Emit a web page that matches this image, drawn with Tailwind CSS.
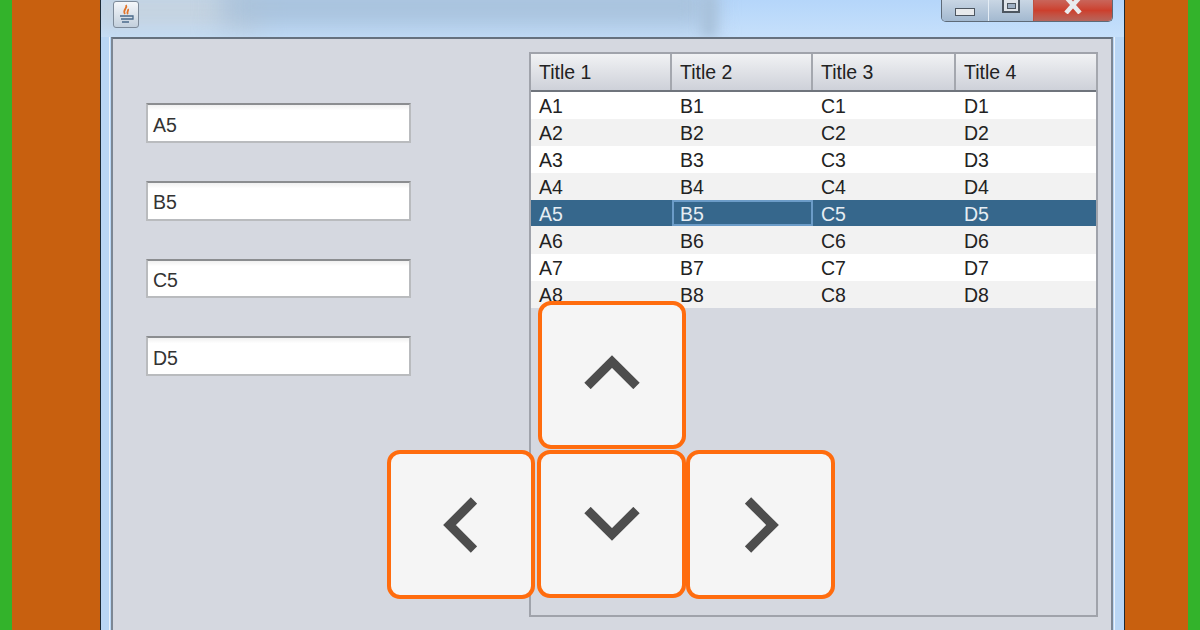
<!DOCTYPE html>
<html lang="en">
<head>
  <meta charset="UTF-8" />
  <title>Table navigation</title>
  <script src="https://cdn.jsdelivr.net/npm/@tailwindcss/browser@4"></script>
</head>
<body class="w-[1200px] h-[630px] overflow-hidden relative bg-[#c8600f] font-['Liberation_Sans',Arial,sans-serif] text-[19.5px] text-[#222]">

  <div class="flex h-[630px]">
    <div class="w-[12px] bg-[#33b32b]"></div>
    <div class="w-[88px] bg-[#c8600f]"></div>

    <!-- java window -->
    <div class="w-[1025px] border-x border-[#1d2a35] bg-[#b9d6f4] flex flex-col">
      <div class="relative h-[37px] flex justify-between items-start pl-[12px] pr-[11px] shrink-0 overflow-hidden bg-gradient-to-b from-[#b5d6fa] to-[#c6e0fb]">
        <div class="absolute left-[-10px] top-[-10px] w-[170px] h-[40px] bg-[#c6d3df] blur-[12px]"></div>
        <div class="absolute left-[120px] top-[-14px] w-[490px] h-[40px] bg-[#a8c1da] blur-[14px]"></div>
        <div class="absolute left-[600px] top-[-5px] w-[16px] h-[42px] bg-[#a8c1da] blur-[6px]"></div>
        <div class="relative w-[26px] h-[27px] mt-[1px] rounded-[3px] border border-[#7d8a99] bg-gradient-to-b from-[#f5f7fa] to-[#c3d0dd] flex items-center justify-center">
          <svg width="18" height="22" viewBox="0 0 18 22" fill="none">
            <path d="M9 1c2 3-4 5-1 9M11 5c1 2-2 3 0 5" stroke="#e0742a" stroke-width="1.8" />
            <path d="M3 12h10M4 15h9M5 18h7M13 12h3v3h-3" stroke="#4a6a8a" stroke-width="1.3" />
          </svg>
        </div>
        <div class="relative flex h-[22px] w-[172px] rounded-b-[5px] border border-t-0 border-[#5d6a78] overflow-hidden">
          <div class="w-[47px] border-r border-[#e4edf5] bg-gradient-to-b from-[#c9d6e4] to-[#a3b9d0] flex items-center justify-center">
            <div class="w-[20px] h-[8px] mt-[3px] border border-[#4d5660] bg-[#e8eaec]"></div>
          </div>
          <div class="w-[45px] border-r border-[#c0503f] bg-gradient-to-b from-[#c9d6e4] to-[#a3b9d0] flex justify-center">
            <div class="w-[18px] h-[13px] border-2 border-t-0 border-[#4d5660] bg-[#dfe4ea] flex items-center justify-center">
              <div class="w-[9px] h-[6px] border border-[#4d5660] bg-[#9fb0c4]"></div>
            </div>
          </div>
          <div class="flex-1 bg-gradient-to-b from-[#c9655a] via-[#cc3f2d] to-[#b5655c] flex justify-center">
            <svg width="20" height="14" viewBox="0 0 20 14" fill="none"><path d="M3-3 17 13M17-3 3 13" stroke="#e9ecee" stroke-width="4.5" /></svg>
          </div>
        </div>
      </div>

      <!-- content pane -->
      <div class="flex-1 ml-[8px] mr-[9px] pl-[1px] pr-[1px] border-x border-[#e9f2fb] bg-[#b9d6f4] flex flex-col">
      <div class="flex-1 border-x-2 border-t-2 border-[#7c8794] border-t-[#66717e] bg-[#d5d8e0] flex pl-[33px] pt-[13px]">
        <div class="w-[265px] mr-[118px] flex flex-col gap-[38px] pt-[51px]">
          <div class="h-[40px] border-2 border-[#b9bbbe] border-t-[#8b8d90] bg-gradient-to-b from-[#f0f0f0] to-[#fff] to-[15%] flex items-center pl-[5px] pt-[5px] text-[#333]">A5</div>
          <div class="h-[40px] border-2 border-[#b9bbbe] border-t-[#8b8d90] bg-gradient-to-b from-[#f0f0f0] to-[#fff] to-[15%] flex items-center pl-[5px] pt-[4px] text-[#333]">B5</div>
          <div class="h-[39px] border-2 border-[#b9bbbe] border-t-[#8b8d90] bg-gradient-to-b from-[#f0f0f0] to-[#fff] to-[15%] flex items-center pl-[5px] pt-[4px] text-[#333]">C5</div>
          <div class="h-[40px] border-2 border-[#b9bbbe] border-t-[#8b8d90] bg-gradient-to-b from-[#f0f0f0] to-[#fff] to-[15%] flex items-center pl-[5px] pt-[5px] text-[#333]">D5</div>
        </div>

        <!-- table -->
        <div class="w-[569px] h-[565px] border-2 border-[#a0a3ab] flex flex-col">
          <div class="h-[38px] shrink-0 grid grid-cols-[141px_141px_143px_142px] border-b-2 border-[#6f747c] bg-gradient-to-b from-[#f1f2f4] to-[#ced1d9]">
            <div class="border-r-2 border-[#a4a7ae] pl-[8px] pt-[2px] flex items-center">Title 1</div>
            <div class="border-r-2 border-[#a4a7ae] pl-[8px] pt-[2px] flex items-center">Title 2</div>
            <div class="border-r-2 border-[#a4a7ae] pl-[8px] pt-[2px] flex items-center">Title 3</div>
            <div class="border-r-2 border-[#a4a7ae] pl-[8px] pt-[2px] flex items-center">Title 4</div>
          </div>
          <div class="h-[27px] grid grid-cols-[141px_141px_143px_142px] bg-white items-center">
            <div class="pl-[8px]">A1</div><div class="pl-[8px]">B1</div><div class="pl-[8px]">C1</div><div class="pl-[8px]">D1</div>
          </div>
          <div class="h-[27px] grid grid-cols-[141px_141px_143px_142px] bg-[#f2f2f2] items-center">
            <div class="pl-[8px]">A2</div><div class="pl-[8px]">B2</div><div class="pl-[8px]">C2</div><div class="pl-[8px]">D2</div>
          </div>
          <div class="h-[27px] grid grid-cols-[141px_141px_143px_142px] bg-white items-center">
            <div class="pl-[8px]">A3</div><div class="pl-[8px]">B3</div><div class="pl-[8px]">C3</div><div class="pl-[8px]">D3</div>
          </div>
          <div class="h-[27px] grid grid-cols-[141px_141px_143px_142px] bg-[#f2f2f2] items-center">
            <div class="pl-[8px]">A4</div><div class="pl-[8px]">B4</div><div class="pl-[8px]">C4</div><div class="pl-[8px]">D4</div>
          </div>
          <div class="h-[27px] grid grid-cols-[141px_141px_143px_142px] bg-[#36678c] text-[#e6edf3] border-b border-[#f2f2f2]">
            <div class="pl-[8px] pt-[1px] flex items-center leading-[20px]">A5</div>
            <div class="pl-[6px] pt-[1px] flex items-center leading-[20px] border-2 border-[#6c9cc8]">B5</div>
            <div class="pl-[8px] pt-[1px] flex items-center leading-[20px]">C5</div>
            <div class="pl-[8px] pt-[1px] flex items-center leading-[20px]">D5</div>
          </div>
          <div class="h-[27px] grid grid-cols-[141px_141px_143px_142px] bg-[#f2f2f2] items-center">
            <div class="pl-[8px]">A6</div><div class="pl-[8px]">B6</div><div class="pl-[8px]">C6</div><div class="pl-[8px]">D6</div>
          </div>
          <div class="h-[27px] grid grid-cols-[141px_141px_143px_142px] bg-white items-center">
            <div class="pl-[8px]">A7</div><div class="pl-[8px]">B7</div><div class="pl-[8px]">C7</div><div class="pl-[8px]">D7</div>
          </div>
          <div class="h-[27px] grid grid-cols-[141px_141px_143px_142px] bg-[#f2f2f2] items-center">
            <div class="pl-[8px]">A8</div><div class="pl-[8px]">B8</div><div class="pl-[8px]">C8</div><div class="pl-[8px]">D8</div>
          </div>
        </div>
      </div>
      </div>
    </div>

    <div class="w-[63px] bg-[#c8600f]"></div>
    <div class="flex-1 bg-[#33b32b]"></div>
  </div>

  <!-- arrow keys, over the window -->
  <div class="absolute left-[538px] top-[301px] w-[148px] h-[148px] rounded-[13px] border-4 border-[#ff6c0e] bg-[#f5f5f5] flex items-center justify-center pb-[6px]">
    <svg width="56" height="34" viewBox="0 0 56 34" fill="none"><path d="M3.500 31 28 6.500 52.500 31" stroke="#4d4d4d" stroke-width="9" /></svg>
  </div>
  <div class="absolute left-[387px] top-[450px] w-[148px] h-[149px] rounded-[13px] border-4 border-[#ff6c0e] bg-[#f5f5f5] flex items-center justify-center pr-[3px]">
    <svg width="34" height="56" viewBox="0 0 34 56" fill="none"><path d="M31 3.500 6.500 28 31 52.500" stroke="#4d4d4d" stroke-width="9" /></svg>
  </div>
  <div class="absolute left-[537px] top-[450px] w-[149px] h-[148px] rounded-[13px] border-4 border-[#ff6c0e] bg-[#f5f5f5] flex items-center justify-center">
    <svg width="56" height="34" viewBox="0 0 56 34" fill="none"><path d="M3.500 3 28 27.500 52.500 3" stroke="#4d4d4d" stroke-width="9" /></svg>
  </div>
  <div class="absolute left-[686px] top-[450px] w-[149px] h-[149px] rounded-[13px] border-4 border-[#ff6c0e] bg-[#f5f5f5] flex items-center justify-center pl-[3px]">
    <svg width="34" height="56" viewBox="0 0 34 56" fill="none"><path d="M3 3.500 27.500 28 3 52.500" stroke="#4d4d4d" stroke-width="9" /></svg>
  </div>

</body>
</html>
